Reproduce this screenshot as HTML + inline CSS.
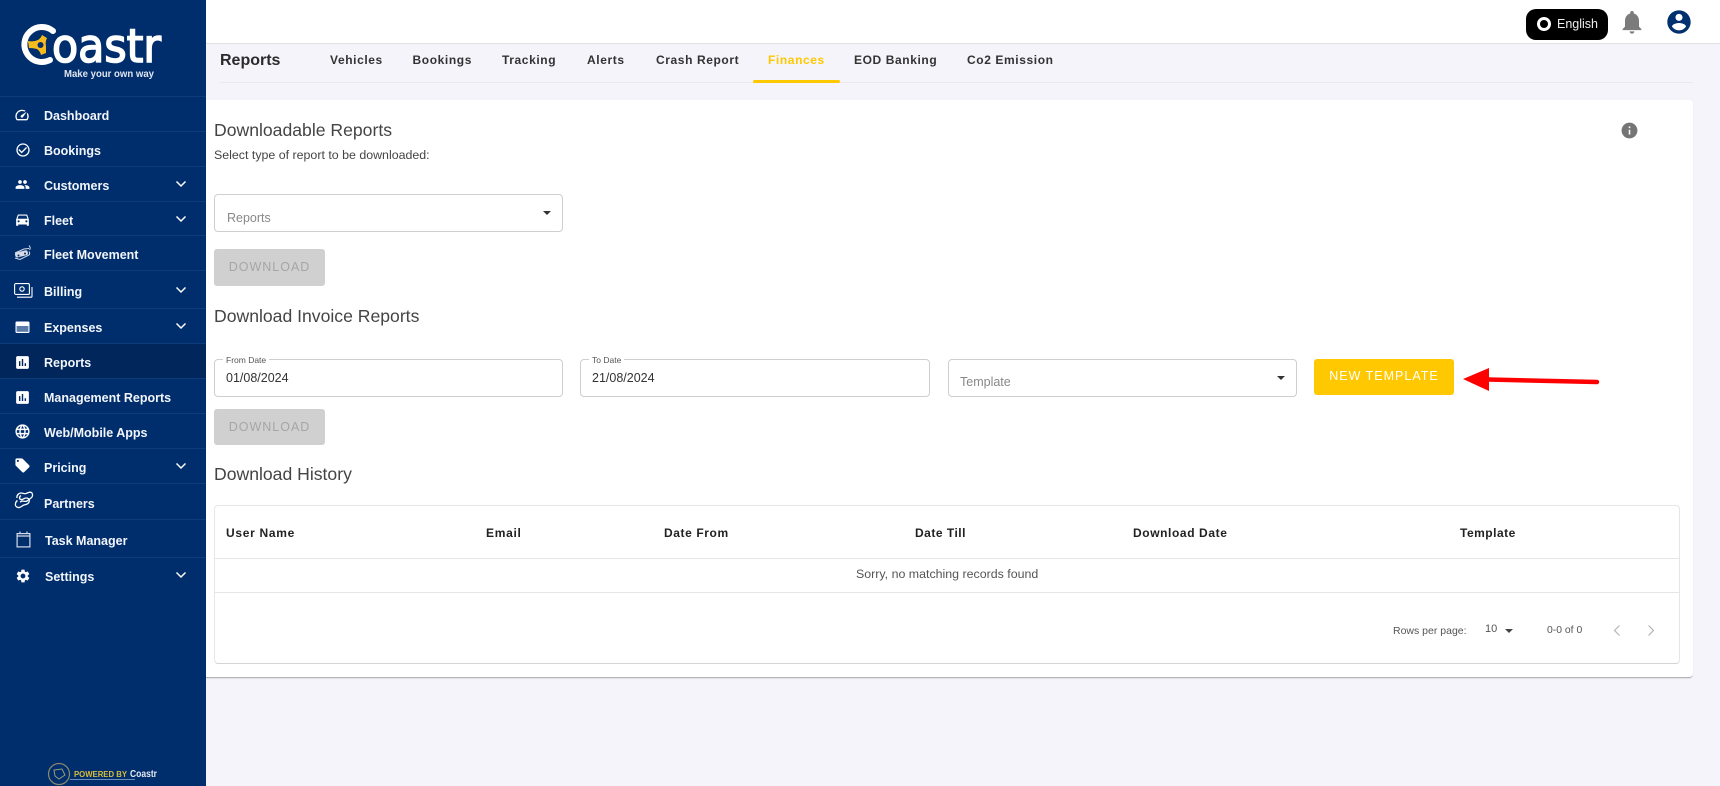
<!DOCTYPE html>
<html><head><meta charset="utf-8"><title>Reports</title>
<style>
*{box-sizing:border-box}
html,body{margin:0;padding:0;width:1720px;height:786px;overflow:hidden;background:#f4f4fa;font-family:"Liberation Sans",Arial,sans-serif}
.a{position:absolute}
.t{position:absolute;white-space:nowrap;line-height:20px;height:20px}
#side{position:absolute;left:0;top:0;width:206px;height:786px;background:#002e6d}
.sep{position:absolute;left:0;width:206px;height:1px;background:#0d3c7a}
.m{position:absolute;left:44px;white-space:nowrap;line-height:20px;height:20px;font-size:12.5px;font-weight:bold;color:#f2f5fa}
.ic{position:absolute;fill:#fff}
.ch{position:absolute;left:175px;fill:none;stroke:#fff;stroke-width:1.5}
.tab{position:absolute;top:50px;white-space:nowrap;line-height:20px;font-size:12px;font-weight:bold;letter-spacing:.6px;color:#333}
h3{margin:0;position:absolute;left:214px;font-size:17.6px;font-weight:normal;color:#444;line-height:24px;white-space:nowrap}
.box{position:absolute;background:#fff;border:1px solid #cfcfcf;border-radius:4px}
.btn{position:absolute;left:214px;width:111px;background:#d0d0d0;border-radius:3px;color:#a6a6a6;font-size:12.5px;letter-spacing:1px;text-align:center}
.lab{position:absolute;font-size:8.5px;color:#555;background:#fff;padding:0 3px;line-height:10px;white-space:nowrap}
.val{position:absolute;font-size:12.5px;color:#333;line-height:20px;white-space:nowrap}
.ph{position:absolute;font-size:12.5px;color:#888;line-height:20px;white-space:nowrap}
.tri{position:absolute;width:0;height:0;border-left:4.5px solid transparent;border-right:4.5px solid transparent;border-top:4.5px solid #333}
.th{position:absolute;top:523px;font-size:12px;font-weight:bold;color:#222;line-height:20px;white-space:nowrap}
.sm{position:absolute;font-size:11px;color:#555;line-height:20px;white-space:nowrap}
</style></head><body>

<div class="a" style="left:206px;top:0;width:1514px;height:44px;background:#fff;border-bottom:1px solid #e2e2e6"></div>
<div class="a" style="left:220px;top:82px;width:1473px;height:1px;background:#e8e8ee"></div>

<!-- card -->
<div class="a" style="left:206px;top:100px;width:1487px;height:578px;background:#fff;border-radius:0 4px 4px 0;border-bottom:1px solid #b5b5b8;box-shadow:0 1px 1px rgba(0,0,0,.08)"></div>

<!-- sidebar -->
<div id="side">
<svg class="a" style="left:0;top:0" width="206" height="90" viewBox="0 0 206 90">
 <path d="M53 31A17.500 17.500 0 1 0 50 60" fill="none" stroke="#fff" stroke-width="6" stroke-linecap="round"/>
 <path d="M28 41Q34 42 38 40Q41 38 42 35L47 38Q45 42 46 46Q46 50 46 53L41 55Q40 51 37 49Q33 48 29 48Z" fill="#f6bc1e"/>
 <circle cx="40.500" cy="45" r="3" fill="#002e6d"/>
 <text x="52" y="62" font-family="DejaVu Sans" font-size="46" fill="#fff" stroke="#fff" stroke-width="1.600" textLength="109" lengthAdjust="spacingAndGlyphs">oastr</text>
 <text x="64" y="77" font-family="Liberation Sans" font-weight="bold" font-size="10" fill="#dfe5ef" textLength="90" lengthAdjust="spacingAndGlyphs">Make your own way</text>
</svg>

<div class="sep" style="top:96px"></div><div class="sep" style="top:131px"></div><div class="sep" style="top:166px"></div><div class="sep" style="top:201px"></div><div class="sep" style="top:235px"></div><div class="sep" style="top:270px"></div><div class="sep" style="top:308px"></div>
<div class="a" style="left:0;top:344px;width:206px;height:34px;background:#00265c"></div>
<div class="sep" style="top:343px"></div><div class="sep" style="top:378px"></div><div class="sep" style="top:413px"></div><div class="sep" style="top:448px"></div><div class="sep" style="top:483px"></div><div class="sep" style="top:519px"></div><div class="sep" style="top:557px"></div>

<div class="m" style="top:106px">Dashboard</div>
<div class="m" style="top:141px">Bookings</div>
<div class="m" style="top:176px">Customers</div>
<div class="m" style="top:211px">Fleet</div>
<div class="m" style="top:245px">Fleet Movement</div>
<div class="m" style="top:282px">Billing</div>
<div class="m" style="top:318px">Expenses</div>
<div class="m" style="top:353px">Reports</div>
<div class="m" style="top:388px">Management Reports</div>
<div class="m" style="top:423px">Web/Mobile Apps</div>
<div class="m" style="top:458px">Pricing</div>
<div class="m" style="top:494px">Partners</div>
<div class="m" style="top:531px;left:45px">Task Manager</div>
<div class="m" style="top:567px;left:45px">Settings</div>

<svg class="ic" style="left:14px;top:107px" width="16" height="16" viewBox="0 0 24 24"><path d="M20.380 8.570l-1.230 1.850a8 8 0 0 1-.22 7.580H5.070A8 8 0 0 1 15.580 6.850l1.850-1.230A10 10 0 0 0 3.350 19a2 2 0 0 0 1.720 1h13.850a2 2 0 0 0 1.740-1 10 10 0 0 0-.27-10.440zm-9.790 6.840a2 2 0 0 0 2.830 0l5.660-8.490-8.490 5.660a2 2 0 0 0 0 2.830z"/></svg>
<svg class="ic" style="left:14.500px;top:142px" width="16" height="16" viewBox="0 0 24 24"><path d="M16.590 7.580L10 14.170l-3.590-3.580L5 12l5 5 8-8zM12 2C6.480 2 2 6.480 2 12s4.480 10 10 10 10-4.480 10-10S17.520 2 12 2zm0 18c-4.420 0-8-3.580-8-8s3.580-8 8-8 8 3.580 8 8-3.580 8-8 8z"/></svg>
<svg class="ic" style="left:15px;top:177px" width="15" height="15" viewBox="0 0 24 24"><path d="M16 11c1.660 0 2.990-1.340 2.990-3S17.660 5 16 5c-1.660 0-3 1.340-3 3s1.340 3 3 3zm-8 0c1.660 0 2.990-1.340 2.990-3S9.660 5 8 5C6.340 5 5 6.340 5 8s1.340 3 3 3zm0 2c-2.330 0-7 1.170-7 3.500V19h14v-2.500c0-2.330-4.670-3.500-7-3.500zm8 0c-.29 0-.62.02-.97.05 1.160.84 1.970 1.970 1.970 3.450V19h6v-2.500c0-2.330-4.670-3.500-7-3.500z"/></svg>
<svg class="ic" style="left:14px;top:211px" width="17" height="17" viewBox="0 0 24 24"><path d="M18.920 6.010C18.720 5.420 18.160 5 17.500 5h-11c-.66 0-1.210.42-1.420 1.010L3 12v8c0 .55.45 1 1 1h1c.55 0 1-.45 1-1v-1h12v1c0 .55.45 1 1 1h1c.55 0 1-.45 1-1v-8l-2.080-5.990zM6.500 16c-.83 0-1.500-.67-1.500-1.500S5.670 13 6.500 13s1.500.67 1.500 1.500S7.330 16 6.500 16zm11 0c-.83 0-1.500-.67-1.500-1.500s.67-1.500 1.500-1.500 1.500.67 1.500 1.500-.67 1.500-1.500 1.500zM5 11l1.500-4.500h11L19 11H5z"/></svg>
<svg class="a" style="left:13px;top:244px" width="19" height="18" viewBox="0 0 19 18" fill="none" stroke="#d5dce8"><path d="M2 9l9-4 5-.5M16 1.500c1.500 1.500 1.500 3 .5 4.500M2 14l5 1.500 9-4.500c1-1 1-2 0-3.500"/><rect x="2" y="7.500" width="13" height="5" rx="2" fill="#d5dce8" stroke="none" transform="rotate(-14 8 10)"/><circle cx="5.500" cy="11.500" r="1" fill="#002e6d" stroke="none"/><circle cx="12" cy="9.500" r="1" fill="#002e6d" stroke="none"/></svg>
<svg class="a" style="left:14px;top:283px" width="19" height="15" viewBox="0 0 19 15" fill="none" stroke="#fff" stroke-width="1.100"><rect x=".6" y=".6" width="14.800" height="10.800" rx="1.200"/><circle cx="8" cy="6" r="2.200"/><path d="M18 4v9.200a1 1 0 0 1-1 1H3"/></svg>
<svg class="a" style="left:15px;top:321px" width="15" height="13" viewBox="0 0 15 13"><rect width="14" height="11.500" x=".5" y=".5" rx="1.200" fill="#fff"/><rect x="1.600" y="5" width="11.800" height="5.800" fill="#5a7cab"/></svg>
<svg class="ic" style="left:14px;top:354px" width="17" height="17" viewBox="0 0 24 24"><path d="M19 3H5c-1.100 0-2 .9-2 2v14c0 1.100.9 2 2 2h14c1.100 0 2-.9 2-2V5c0-1.100-.9-2-2-2zM9 17H7v-7h2v7zm4 0h-2V7h2v10zm4 0h-2v-4h2v4z"/></svg>
<svg class="ic" style="left:14px;top:389px" width="17" height="17" viewBox="0 0 24 24"><path d="M19 3H5c-1.100 0-2 .9-2 2v14c0 1.100.9 2 2 2h14c1.100 0 2-.9 2-2V5c0-1.100-.9-2-2-2zM9 17H7v-7h2v7zm4 0h-2V7h2v10zm4 0h-2v-4h2v4z"/></svg>
<svg class="ic" style="left:14px;top:423px" width="17" height="17" viewBox="0 0 24 24"><path d="M11.990 2C6.470 2 2 6.480 2 12s4.470 10 9.990 10C17.520 22 22 17.520 22 12S17.520 2 11.990 2zm6.930 6h-2.950c-.32-1.250-.78-2.450-1.380-3.560 1.840.63 3.370 1.910 4.330 3.560zM12 4.040c.83 1.200 1.480 2.530 1.910 3.960h-3.820c.43-1.430 1.080-2.760 1.910-3.960zM4.260 14C4.100 13.360 4 12.690 4 12s.1-1.360.26-2h3.380c-.08.66-.14 1.320-.14 2s.06 1.340.14 2H4.260zm.82 2h2.950c.32 1.250.78 2.450 1.380 3.560-1.840-.63-3.370-1.900-4.330-3.560zm2.950-8H5.080c.96-1.660 2.490-2.930 4.330-3.560C8.810 5.550 8.350 6.750 8.030 8zM12 19.960c-.83-1.200-1.480-2.530-1.910-3.960h3.820c-.43 1.430-1.080 2.760-1.910 3.960zM14.340 14H9.660c-.09-.66-.16-1.320-.16-2s.07-1.350.16-2h4.680c.09.65.16 1.320.16 2s-.07 1.340-.16 2zm.25 5.560c.6-1.110 1.060-2.310 1.380-3.560h2.950c-.96 1.650-2.490 2.930-4.330 3.560zM16.360 14c.08-.66.14-1.320.14-2s-.06-1.340-.14-2h3.380c.16.64.26 1.310.26 2s-.1 1.360-.26 2h-3.380z"/></svg>
<svg class="ic" style="left:14px;top:457px" width="17" height="17" viewBox="0 0 24 24"><path d="M21.410 11.580l-9-9C12.050 2.220 11.550 2 11 2H4c-1.100 0-2 .9-2 2v7c0 .55.22 1.050.59 1.420l9 9c.36.36.86.58 1.410.58.55 0 1.050-.22 1.410-.59l7-7c.37-.36.59-.86.59-1.410 0-.55-.23-1.060-.59-1.420zM5.500 7C4.670 7 4 6.330 4 5.500S4.670 4 5.500 4 7 4.670 7 5.500 6.330 7 5.500 7z"/></svg>
<svg class="a" style="left:14px;top:490px" width="20" height="20" viewBox="0 0 20 20" fill="none" stroke="#fff" stroke-width="1.300" stroke-linejoin="round"><path d="M3 8c-.5-3 2-5 4-5 2 0 3 1 5 .5s4-2.500 6-.5c1 2 .5 4-1 5l-4 3c-2 1-3 0-5 0l-2 1"/><path d="M7 5.500C5 7 5 9 7 9.500c2 .5 3-1.500 5-1.500 2 0 4 1 3 4-1 2.500-3 2.500-5 3s-3 3-6 2.500c-2-.5-3-2-2.500-4 .3-1.500 1-2.500 2-3"/></svg>
<svg class="a" style="left:16px;top:531px" width="15" height="17" viewBox="0 0 15 17" fill="none" stroke="#d5dce8" stroke-width="1.200"><rect x="1.100" y="2.600" width="12.800" height="13.300"/><path d="M1 5h13M4 .5v2.500M11 .5v2.500"/></svg>
<svg class="ic" style="left:14.500px;top:568px" width="16" height="16" viewBox="0 0 24 24"><path d="M19.140 12.940c.04-.3.06-.61.06-.94 0-.32-.02-.64-.07-.94l2.030-1.580c.18-.14.23-.41.12-.61l-1.920-3.320c-.12-.22-.37-.29-.59-.22l-2.390.96c-.5-.38-1.030-.7-1.620-.94l-.36-2.540c-.04-.24-.24-.41-.48-.41h-3.840c-.24 0-.43.17-.47.41l-.36 2.540c-.59.24-1.130.57-1.620.94l-2.390-.96c-.22-.08-.47 0-.59.22L2.740 8.870c-.12.21-.08.47.12.61l2.030 1.580c-.05.3-.09.63-.09.94s.02.64.07.94l-2.030 1.580c-.18.14-.23.41-.12.61l1.920 3.320c.12.22.37.29.59.22l2.390-.96c.5.38 1.030.7 1.620.94l.36 2.540c.05.24.24.41.48.41h3.840c.24 0 .44-.17.47-.41l.36-2.540c.59-.24 1.130-.56 1.620-.94l2.390.96c.22.08.47 0 .59-.22l1.920-3.320c.12-.22.07-.47-.12-.61l-2.010-1.580zM12 15.600c-1.980 0-3.600-1.620-3.600-3.600s1.620-3.600 3.600-3.600 3.600 1.620 3.600 3.600-1.620 3.600-3.600 3.600z"/></svg>

<svg class="ch" style="top:180px" width="12" height="8" viewBox="0 0 12 8"><path d="M1.500 1.500L6 6l4.500-4.500"/></svg>
<svg class="ch" style="top:215px" width="12" height="8" viewBox="0 0 12 8"><path d="M1.500 1.500L6 6l4.500-4.500"/></svg>
<svg class="ch" style="top:286px" width="12" height="8" viewBox="0 0 12 8"><path d="M1.500 1.500L6 6l4.500-4.500"/></svg>
<svg class="ch" style="top:322px" width="12" height="8" viewBox="0 0 12 8"><path d="M1.500 1.500L6 6l4.500-4.500"/></svg>
<svg class="ch" style="top:462px" width="12" height="8" viewBox="0 0 12 8"><path d="M1.500 1.500L6 6l4.500-4.500"/></svg>
<svg class="ch" style="top:571px" width="12" height="8" viewBox="0 0 12 8"><path d="M1.500 1.500L6 6l4.500-4.500"/></svg>

<svg class="a" style="left:46px;top:760px" width="116" height="26" viewBox="0 0 116 26">
 <circle cx="13" cy="14" r="10.500" fill="none" stroke="#8a8a6a" stroke-width="1.200"/>
 <path d="M8 10l8-1 3 6-6 4-4-3z" fill="none" stroke="#9a9a7a"/>
 <text x="28" y="17" font-family="Liberation Sans" font-weight="bold" font-size="8" fill="#d9bd3a" textLength="53" lengthAdjust="spacingAndGlyphs">POWERED BY</text>
 <text x="84" y="17" font-family="Liberation Sans" font-weight="bold" font-size="10" fill="#e4e9f2" textLength="27" lengthAdjust="spacingAndGlyphs">Coastr</text>
 <rect x="24" y="19" width="65" height="1" fill="#6d8cb8"/>
</svg>
</div>

<!-- top bar right -->
<div class="a" style="left:1526px;top:9px;width:82px;height:31px;background:#000;border-radius:10px"></div>
<div class="a" style="left:1537px;top:17px;width:14px;height:14px;border-radius:50%;border:3px solid #fff"></div>
<div class="t" style="left:1557px;top:14px;font-size:12.500px;color:#eee">English</div>
<svg class="a" style="left:1618px;top:8px;fill:#7b7b7b" width="28" height="28" viewBox="0 0 24 24"><path d="M12 22c1.100 0 2-.9 2-2h-4c0 1.100.9 2 2 2zm6-6v-5c0-3.070-1.630-5.640-4.500-6.320V4c0-.83-.67-1.500-1.500-1.500s-1.500.67-1.500 1.500v.68C7.640 5.360 6 7.920 6 11v5l-2 2v1h16v-1l-2-2z"/></svg>
<svg class="a" style="left:1665px;top:7.500px;fill:#00306e" width="28" height="28" viewBox="0 0 24 24"><path d="M12 2C6.480 2 2 6.480 2 12s4.480 10 10 10 10-4.480 10-10S17.520 2 12 2zm0 3c1.660 0 3 1.340 3 3s-1.340 3-3 3-3-1.340-3-3 1.340-3 3-3zm0 14.200c-2.500 0-4.710-1.280-6-3.220.03-1.990 4-3.080 6-3.080 1.990 0 5.970 1.090 6 3.080-1.290 1.940-3.500 3.220-6 3.220z"/></svg>

<!-- tabs -->
<div class="t" style="left:220px;top:51px;font-size:16px;font-weight:bold;color:#2b2b2b">Reports</div>
<div class="tab" style="left:330px">Vehicles</div>
<div class="tab" style="left:412.500px">Bookings</div>
<div class="tab" style="left:502px">Tracking</div>
<div class="tab" style="left:587px">Alerts</div>
<div class="tab" style="left:656px">Crash Report</div>
<div class="tab" style="left:768px;color:#ffc800">Finances</div>
<div class="tab" style="left:854px">EOD Banking</div>
<div class="tab" style="left:967px">Co2 Emission</div>
<div class="a" style="left:753px;top:80px;width:87px;height:3px;background:#ffc800;border-radius:2px"></div>

<!-- info -->
<svg class="a" style="left:1619.500px;top:120.500px;fill:#757575" width="19" height="19" viewBox="0 0 24 24"><path d="M12 2C6.480 2 2 6.480 2 12s4.480 10 10 10 10-4.480 10-10S17.520 2 12 2zm1 15h-2v-6h2v6zm0-8h-2V7h2v2z"/></svg>

<h3 style="top:118px">Downloadable Reports</h3>
<div class="t" style="left:214px;top:145px;font-size:12.400px;color:#444">Select type of report to be downloaded:</div>
<div class="box" style="left:214px;top:194px;width:349px;height:38px"></div>
<div class="ph" style="left:227px;top:208px">Reports</div>
<div class="tri" style="left:543px;top:211px"></div>
<div class="btn" style="top:249px;height:37px;line-height:37px">DOWNLOAD</div>

<h3 style="top:304px">Download Invoice Reports</h3>
<div class="box" style="left:214px;top:359px;width:349px;height:38px"></div>
<div class="lab" style="left:223px;top:355px">From Date</div>
<div class="val" style="left:226px;top:368px">01/08/2024</div>
<div class="box" style="left:580px;top:359px;width:350px;height:38px"></div>
<div class="lab" style="left:589px;top:355px">To Date</div>
<div class="val" style="left:592px;top:368px">21/08/2024</div>
<div class="box" style="left:948px;top:359px;width:349px;height:38px"></div>
<div class="ph" style="left:960px;top:372px">Template</div>
<div class="tri" style="left:1277px;top:376px"></div>
<div class="a" style="left:1314px;top:359px;width:140px;height:36px;line-height:35px;background:#ffc800;border-radius:3px;color:#fff;font-size:12.500px;letter-spacing:1px;text-align:center">NEW TEMPLATE</div>
<svg class="a" style="left:1460px;top:365px" width="142" height="28" viewBox="0 0 142 28"><path d="M29 3L3 14l26 12z" fill="#f00"/><path d="M28 14.500l109 2.500" stroke="#f00" stroke-width="4.500" stroke-linecap="round" fill="none"/></svg>
<div class="btn" style="top:409px;height:36px;line-height:36px">DOWNLOAD</div>

<h3 style="top:462px">Download History</h3>

<!-- table -->
<div class="a" style="left:214px;top:505px;width:1466px;height:159px;border:1px solid #e6e6e6;border-bottom:1px solid #d4d4d4;border-radius:4px;background:#fff"></div>
<div class="a" style="left:215px;top:558px;width:1464px;height:1px;background:#e6e6e6"></div>
<div class="a" style="left:215px;top:592px;width:1464px;height:1px;background:#e6e6e6"></div>
<div class="th" style="left:226px;letter-spacing:.7px">User Name</div>
<div class="th" style="left:486px;letter-spacing:.7px">Email</div>
<div class="th" style="left:664px;letter-spacing:.6px">Date From</div>
<div class="th" style="left:915px;letter-spacing:.5px">Date Till</div>
<div class="th" style="left:1133px;letter-spacing:.6px">Download Date</div>
<div class="th" style="left:1460px;letter-spacing:.5px">Template</div>
<div class="t" style="left:856px;top:564px;font-size:12.400px;color:#555">Sorry, no matching records found</div>
<div class="sm" style="left:1393px;top:621px;font-size:10.500px">Rows per page:</div>
<div class="sm" style="left:1485px;top:619px">10</div>
<div class="tri" style="left:1505px;top:629px;border-top-color:#444;border-left-width:4px;border-right-width:4px;border-top-width:4px"></div>
<div class="sm" style="left:1547px;top:621px;font-size:10.400px">0-0 of 0</div>
<svg class="a" style="left:1612px;top:624px" width="10" height="13" viewBox="0 0 10 13" fill="none" stroke="#b5b5b5" stroke-width="1.200"><path d="M7.500 1.500L2.500 6.500l5 5"/></svg>
<svg class="a" style="left:1646px;top:624px" width="10" height="13" viewBox="0 0 10 13" fill="none" stroke="#b5b5b5" stroke-width="1.200"><path d="M2.500 1.500l5 5-5 5"/></svg>

</body></html>
